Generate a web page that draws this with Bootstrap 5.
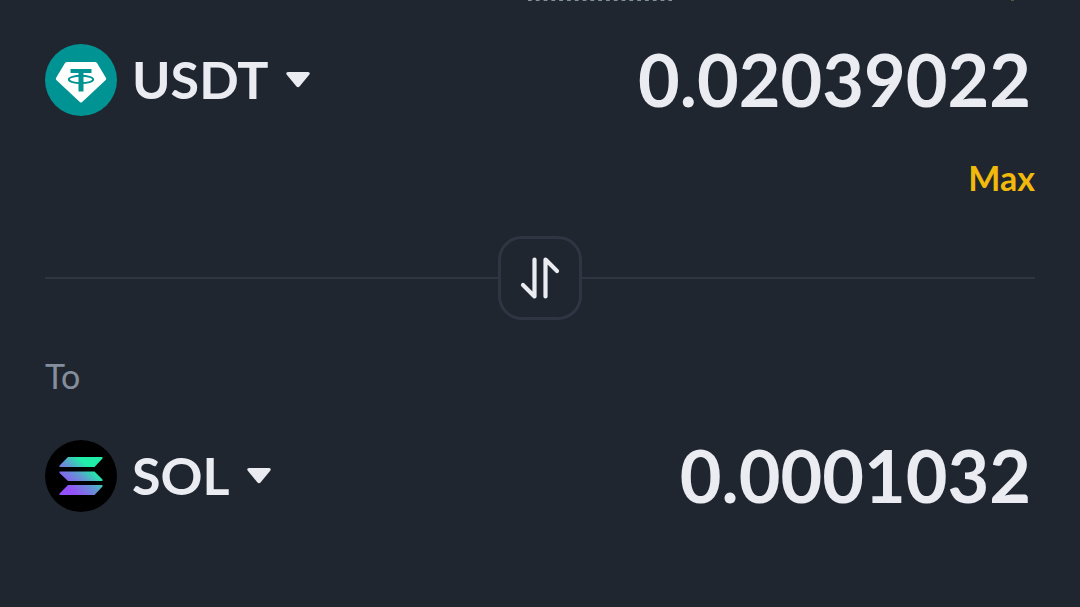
<!DOCTYPE html>
<html lang="en">
<head>
<meta charset="utf-8">
<meta name="viewport" content="width=device-width, initial-scale=1">
<title>Convert</title>
<link href="https://cdn.jsdelivr.net/npm/bootstrap@5.3.0/dist/css/bootstrap.min.css" rel="stylesheet">
<style>
  body { background: #202630; color: #eaecf2; font-family: Lato, "Open Sans", sans-serif; }
  .convert { padding: 0 45px; }
  .balance-edge { height: 1px; padding-right: 21px; gap: 339px; }
  .balance-dots { width: 144px; height: 1px; }
  .balance-tip { width: 3px; height: 1px; background: #5b5540; }
  .asset-row { gap: 15px; height: 72px; }
  .asset-from { margin-top: 43px; }
  .coin { width: 72px; height: 72px; }
  .picker { gap: 17px; color: inherit; font-size: 52px; line-height: 68px; font-weight: 700; }
  .picker span { padding-bottom: 2px; }
  .amount { color: inherit; font-size: 72px; line-height: 70px; height: 72px; font-weight: 700; padding: 0 4px 2px 0; min-width: 0; }
  .max-link { color: #f0b90b; font-size: 34px; line-height: 38px; font-weight: 700; margin-top: 43px; padding-bottom: 2px; }
  .divider { margin-top: 37px; }
  .rule { height: 2px; background: #2f3542; }
  .swap { width: 84px; height: 84px; border: 3px solid #2f3542; border-radius: 24px; color: #eaecf2; }
  .to-label { color: #848e9c; font-size: 34px; line-height: 38px; padding-bottom: 2px; margin-top: 37px; }
  .asset-to { margin-top: 43px; }
</style>
</head>
<body>
<main class="convert">
  <div class="balance-edge d-flex justify-content-end">
    <svg class="balance-dots" viewBox="0 0 144 1" aria-hidden="true"><path d="M0 .5H144" stroke="#848e9c" stroke-dasharray="3.800 4"/></svg>
    <div class="balance-tip"></div>
  </div>
  <section>
    <div class="asset-row asset-from d-flex align-items-center">
      <svg class="coin flex-shrink-0" viewBox="0 0 72 72" aria-hidden="true">
        <circle cx="36" cy="36" r="36" fill="#009393"/>
        <path d="M22 18H50Q51 18 52 19L61 34Q61.500 35 60.700 36L37.200 58Q36 59 34.800 58L11.300 36Q10.500 35 11 34L20 19Q21 18 22 18Z" fill="#fff"/>
        <path d="M25.500 25H46.500V29H38.500V47.500H33.500V29H25.500Z" fill="#009393"/>
        <ellipse cx="36" cy="35.500" rx="12.200" ry="3.700" fill="none" stroke="#009393" stroke-width="1.900"/>
      </svg>
      <button type="button" class="picker btn p-0 border-0 d-flex align-items-center" aria-label="From USDT">
        <span>USDT</span>
        <svg width="24" height="16" viewBox="0 0 24 16" aria-hidden="true"><path d="M2 0H22Q25 .5 23 3L13.500 14.500Q12 16 10.500 14.500L1 3Q-1 .5 2 0Z" fill="currentColor"/></svg>
      </button>
      <input class="amount form-control-plaintext text-end flex-grow-1" type="text" inputmode="decimal" aria-label="Amount to convert" value="0.02039022">
    </div>
    <div class="d-flex justify-content-end">
      <button type="button" class="max-link btn pt-0 px-0 border-0">Max</button>
    </div>
  </section>
  <div class="divider d-flex align-items-center">
    <div class="rule flex-grow-1"></div>
    <button type="button" class="swap btn p-0 d-flex align-items-center justify-content-center" aria-label="Swap">
      <svg width="40" height="42" viewBox="0 0 40 42" fill="none" stroke="currentColor" stroke-width="4.200" stroke-linecap="round" stroke-linejoin="round" aria-hidden="true"><path d="M14.500 2.500V39.500L3 28M25.500 39.500V2.500L37 14"/></svg>
    </button>
    <div class="rule flex-grow-1"></div>
  </div>
  <section>
    <label class="to-label d-block" for="receive">To</label>
    <div class="asset-row asset-to d-flex align-items-center">
      <svg class="coin flex-shrink-0" viewBox="0 0 72 72" aria-hidden="true">
        <defs><linearGradient id="sol" gradientUnits="userSpaceOnUse" x1="20" y1="54" x2="52" y2="18"><stop offset="0.150" stop-color="#9450f8"/><stop offset="0.500" stop-color="#5f9bd0"/><stop offset="0.750" stop-color="#20eda8"/></linearGradient></defs>
        <circle cx="36" cy="36" r="36"/>
        <path d="M23 17H57.500V18.500L49.500 27H14.500V25.500ZM14.500 31.500H49.500L57.500 39.500V41H23L14.500 33ZM23 45H57.500V46.500L49.500 55H14.500V53.500Z" fill="url(#sol)"/>
      </svg>
      <button type="button" class="picker btn p-0 border-0 d-flex align-items-center" aria-label="To SOL">
        <span>SOL</span>
        <svg width="24" height="16" viewBox="0 0 24 16" aria-hidden="true"><path d="M2 0H22Q25 .5 23 3L13.500 14.500Q12 16 10.500 14.500L1 3Q-1 .5 2 0Z" fill="currentColor"/></svg>
      </button>
      <input id="receive" class="amount form-control-plaintext text-end flex-grow-1" type="text" inputmode="decimal" value="0.0001032">
    </div>
  </section>
</main>
<script src="https://cdn.jsdelivr.net/npm/bootstrap@5.3.0/dist/js/bootstrap.bundle.min.js"></script>
</body>
</html>
